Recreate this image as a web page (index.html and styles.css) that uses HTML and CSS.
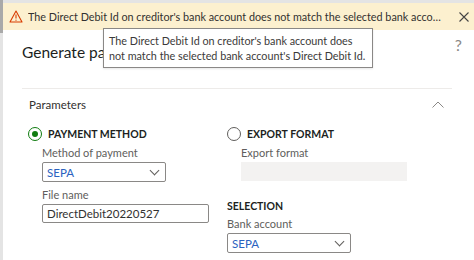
FILE: index.html
```html
<!DOCTYPE html>
<html lang="en">
<head>
    <meta charset="UTF-8">
    <title>Generate payments</title>
    <link rel="stylesheet" href="styles.css">
</head>
<body>
<div class="page">
    <div class="msgbar">
        <svg class="warn" width="14" height="13" viewBox="0 0 14 13">
            <path d="M7 1 L13 12 L1 12 Z" fill="none" stroke="#d83b01" stroke-width="1.1" stroke-linejoin="round"/>
            <path d="M7 4.6 V8.6" stroke="#d83b01" stroke-width="1.1"/>
            <circle cx="7" cy="10.2" r="0.6" fill="#d83b01"/>
        </svg>
        <span class="msgtext">The Direct Debit Id on creditor's bank account does not match the selected bank account's Direct Debit Id.</span>
        <svg class="close" width="10" height="10" viewBox="0 0 10 10">
            <path d="M0.5 0.5 L9.5 9.5 M9.5 0.5 L0.5 9.5" stroke="#444" stroke-width="1.1"/>
        </svg>
    </div>
    <div class="dialog">
        <div class="help">?</div>
        <h1 class="title">Generate payments</h1>
        <div class="section">
            <div class="section-head">
                <span>Parameters</span>
                <svg width="12" height="7" viewBox="0 0 12 7">
                    <path d="M0.5 6.5 L6 1 L11.5 6.5" fill="none" stroke="#8a8886" stroke-width="1"/>
                </svg>
            </div>
            <div class="cols">
                <div class="col">
                    <div class="radio-row">
                        <span class="radio on"></span>
                        <span class="group">PAYMENT METHOD</span>
                    </div>
                    <div class="fields">
                        <label class="lbl">Method of payment</label>
                        <div class="select w124"><span>SEPA</span><i class="chev"></i></div>
                        <label class="lbl next">File name</label>
                        <div class="input">DirectDebit20220527</div>
                    </div>
                </div>
                <div class="col">
                    <div class="radio-row">
                        <span class="radio"></span>
                        <span class="group">EXPORT FORMAT</span>
                    </div>
                    <div class="fields">
                        <label class="lbl">Export format</label>
                        <div class="disabled"></div>
                    </div>
                    <div class="selection">
                        <div class="group">SELECTION</div>
                        <label class="lbl">Bank account</label>
                        <div class="select w124"><span>SEPA</span><i class="chev"></i></div>
                    </div>
                </div>
            </div>
        </div>
        <div class="tooltip">The Direct Debit Id on creditor's bank account does not match the selected bank account's Direct Debit Id.</div>
    </div>
</div>
</body>
</html>
```

FILE: styles.css
```css
*{
    margin: 0;
    padding: 0;
    box-sizing: border-box;
}
body{
    font-family: Lato, "Open Sans", sans-serif;
    background: #e6e6e6;
    color: #323130;
}
.page{
    width: 474px;
    height: 260px;
    padding: 3px 0 0 3px;
    background: linear-gradient(#a9a9a9, #a9a9a9) 0 0 / 3px 33px no-repeat, #e4e4e4;
    overflow: hidden;
    position: relative;
}
.msgbar{
    height: 27px;
    background: #fcf0cf;
    display: flex;
    align-items: center;
    padding: 0 5px 0 6px;
}
.warn{
    flex: none;
    margin-right: 5px;
}
.msgtext{
    flex: 1;
    font-size: 10.8px;
    color: #323130;
    white-space: nowrap;
    overflow: hidden;
    text-overflow: ellipsis;
    padding-right: 18px;
}
.close{
    flex: none;
}
.dialog{
    background: #fff;
    height: 230px;
    position: relative;
    padding: 12px 22px 0 19px;
}
.help{
    position: absolute;
    right: 12px;
    top: 5px;
    font-size: 16px;
    color: #8a8886;
}
.title{
    font-size: 15.5px;
    font-weight: 400;
    line-height: 21px;
    color: #201f1e;
}
.tooltip{
    position: absolute;
    left: 100px;
    top: -2px;
    width: 270px;
    height: 40px;
    background: #fff;
    border: 1px solid #8a8886;
    box-shadow: 0 1px 2px rgba(0,0,0,0.1);
    font-size: 10.8px;
    line-height: 15px;
    color: #3b3a39;
    padding: 4px 3px 4px 5px;
}
.section{
    margin-top: 25px;
    border-top: 1px solid #edebe9;
}
.section-head{
    display: flex;
    justify-content: space-between;
    align-items: center;
    height: 30px;
    padding: 0 8px 0 7px;
    font-size: 11.5px;
    color: #323130;
}
.cols{
    display: grid;
    grid-template-columns: 199px 200px;
    padding: 7px 0 0 6px;
}
.radio-row{
    display: flex;
    align-items: center;
    height: 16px;
}
.radio{
    width: 14px;
    height: 14px;
    border-radius: 50%;
    border: 1px solid #605e5c;
    margin-right: 6px;
    position: relative;
}
.radio.on{
    border: 1.5px solid #107c10;
}
.radio.on::after{
    content: "";
    position: absolute;
    left: 2.5px;
    top: 2.5px;
    width: 6px;
    height: 6px;
    border-radius: 50%;
    background: #107c10;
}
.group{
    font-size: 10.5px;
    font-weight: 700;
    line-height: 16px;
    color: #201f1e;
}
.fields{
    padding: 3px 0 0 14px;
}
.lbl{
    display: block;
    font-size: 11px;
    line-height: 16px;
    color: #605e5c;
    margin-bottom: 1px;
}
.lbl.next{
    margin-top: 5px;
}
.select{
    height: 20px;
    border: 1px solid #8a8886;
    border-radius: 2px;
    display: flex;
    align-items: center;
    justify-content: space-between;
    padding: 0 7px 0 4px;
    font-size: 11.5px;
    color: #2a62c0;
}
.w124{
    width: 124px;
}
.chev{
    width: 7px;
    height: 7px;
    border-right: 1px solid #605e5c;
    border-bottom: 1px solid #605e5c;
    transform: rotate(45deg);
    margin-top: -4px;
}
.input{
    width: 167px;
    height: 19px;
    border: 1px solid #8a8886;
    border-radius: 2px;
    font-size: 11.5px;
    line-height: 17px;
    padding: 0 4px;
    color: #323130;
}
.disabled{
    width: 166px;
    height: 19px;
    background: #f3f2f1;
    margin-top: 1px;
}
.selection{
    margin-top: 17px;
}
.selection .group{
    margin-bottom: 2px;
}
```
